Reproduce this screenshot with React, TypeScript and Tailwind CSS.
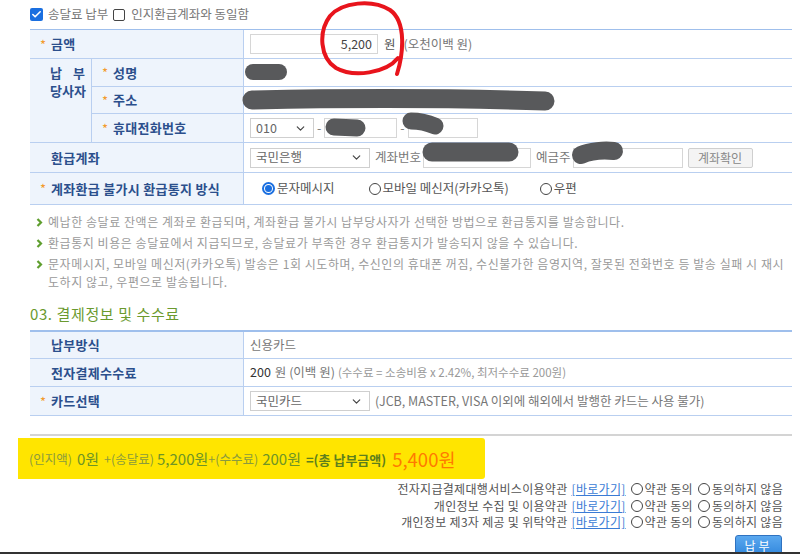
import React from 'react';
import { ChevronDown, Check } from 'lucide-react';

const Star = () => <span className="w-[11px] text-[13px] text-[#f39a2c] leading-none">*</span>;

const Label: React.FC<{ text: string; star?: boolean; w?: string }> = ({ text, star, w = 'w-[214px]' }) => (
  <div className={`${w} shrink-0 bg-[#eef4fc] border-r border-[#b9cff0] flex items-center pl-[10px] pr-1`}>
    {star ? <Star /> : <span className="w-[11px]" />}
    <span className="text-[13px] font-bold text-[#2b4f8c] tracking-[0.3px]">{text}</span>
  </div>
);

const Select: React.FC<{ value: string; w: string }> = ({ value, w }) => (
  <div className={`${w} h-[20px] border border-[#cfcfcf] bg-white flex items-center justify-between pl-[5px] pr-[6px] text-[12.5px] text-[#666]`}>
    <span>{value}</span>
    <ChevronDown className="w-[13px] h-[13px] text-[#444]" strokeWidth={2.2} />
  </div>
);

const Input: React.FC<{ w: string; children?: React.ReactNode }> = ({ w, children }) => (
  <div className={`${w} h-[20px] border border-[#d6d6d6] bg-white flex items-center justify-end pr-[5px] text-[12.5px] text-[#444]`}>
    {children}
  </div>
);

const Radio: React.FC<{ on?: boolean; className?: string }> = ({ on, className = '' }) =>
  on ? (
    <span className={`inline-flex w-[13px] h-[13px] rounded-full border-2 border-[#1a6fe0] items-center justify-center shrink-0 ${className}`}>
      <span className="w-[7px] h-[7px] rounded-full bg-[#1a6fe0]" />
    </span>
  ) : (
    <span className={`inline-block w-[12px] h-[12px] rounded-full border border-[#444] bg-white shrink-0 ${className}`} />
  );

const Bullet = () => (
  <svg width="7" height="9" viewBox="0 0 7 9" className="shrink-0 mt-[5px]">
    <path d="M1.5 1 L5 4.5 L1.5 8" stroke="#5f9e2e" strokeWidth="2.2" fill="none" />
  </svg>
);

const notes = [
  '예납한 송달료 잔액은 계좌로 환급되며, 계좌환급 불가시 납부당사자가 선택한 방법으로 환급통지를 발송합니다.',
  '환급통지 비용은 송달료에서 지급되므로, 송달료가 부족한 경우 환급통지가 발송되지 않을 수 있습니다.',
  '문자메시지, 모바일 메신저(카카오톡) 발송은 1회 시도하며, 수신인의 휴대폰 꺼짐, 수신불가한 음영지역, 잘못된 전화번호 등 발송 실패 시 재시도하지 않고, 우편으로 발송됩니다.',
];

const terms = ['전자지급결제대행서비스이용약관', '개인정보 수집 및 이용약관', '개인정보 제3자 제공 및 위탁약관'];

export default function App() {
  const row = 'flex border-b border-[#b9cff0]';
  return (
    <div className="relative w-[800px] h-[554px] overflow-hidden bg-white font-['Noto_Sans_CJK_KR','Noto_Sans',sans-serif] text-[#666]">
      {/* top checkboxes */}
      <div className="h-[29px] flex items-center pl-[30px] text-[12.5px] text-[#777]">
        <span className="w-[13px] h-[13px] rounded-[2px] bg-[#1a6fe0] flex items-center justify-center">
          <Check className="w-[11px] h-[11px] text-white" strokeWidth={3.5} />
        </span>
        <span className="ml-[5px]">송달료 납부</span>
        <span className="ml-[5px] w-[12px] h-[12px] rounded-[2px] border border-[#444]" />
        <span className="ml-[6px]">인지환급계좌와 동일함</span>
      </div>

      {/* table 1 */}
      <div className="ml-[30px] w-[762px] border-t border-[#9fbfec]">
        <div className={`${row} h-[29px]`}>
          <Label text="금액" star />
          <div className="flex-1 flex items-center pl-[6px] text-[12.5px]">
            <Input w="w-[128px]">5,200</Input>
            <span className="ml-[6px] text-[#555]">원</span>
            <span className="ml-[8px] text-[#777]">(오천이백 원)</span>
          </div>
        </div>
        <div className="flex border-b border-[#b9cff0]">
          <div className="w-[62px] shrink-0 bg-[#eef4fc] border-r border-[#b9cff0] pl-[20px] pt-[5px] text-[13px] font-bold text-[#2b4f8c] leading-[18px]">
            <div className="flex justify-between w-[35px]"><span>납</span><span>부</span></div>
            <div>당사자</div>
          </div>
          <div className="flex-1">
            <div className={`${row} h-[28px]`}>
              <Label text="성명" star w="w-[152px]" />
              <div className="flex-1" />
            </div>
            <div className={`${row} h-[27px] border-[#9fbfec]`}>
              <Label text="주소" star w="w-[152px]" />
              <div className="flex-1" />
            </div>
            <div className="flex h-[28px]">
              <Label text="휴대전화번호" star w="w-[152px]" />
              <div className="flex-1 flex items-center pl-[6px] text-[12.5px]">
                <Select value="010" w="w-[64px]" />
                <span className="mx-[3px] text-[#777]">-</span>
                <Input w="w-[73px]" />
                <span className="mx-[3px] text-[#777]">-</span>
                <Input w="w-[70px]" />
              </div>
            </div>
          </div>
        </div>
        <div className={`${row} h-[30px]`}>
          <Label text="환급계좌" />
          <div className="flex-1 flex items-center pl-[6px] text-[12.5px]">
            <Select value="국민은행" w="w-[120px]" />
            <span className="ml-[5px] mr-[2px] text-[#777]">계좌번호</span>
            <Input w="w-[108px]" />
            <span className="ml-[5px] mr-[2px] text-[#777]">예금주</span>
            <Input w="w-[110px]" />
            <button className="ml-[5px] w-[65px] h-[20px] border border-[#cfcfcf] rounded-[2px] bg-[#f4f4f4] text-[12px] text-[#888]">계좌확인</button>
          </div>
        </div>
        <div className={`${row} h-[32px]`}>
          <Label text="계좌환급 불가시 환급통지 방식" star />
          <div className="flex-1 flex items-center pl-[18px] text-[12.5px] text-[#555]">
            <Radio on />
            <span className="ml-[2px]">문자메시지</span>
            <Radio className="ml-[34px]" />
            <span className="ml-[2px]">모바일 메신저(카카오톡)</span>
            <Radio className="ml-[31px]" />
            <span className="ml-[2px]">우편</span>
          </div>
        </div>
      </div>

      {/* notes */}
      <ul className="mt-[8px] ml-[36px] w-[752px] flex flex-col gap-[3px]">
        {notes.map((n, i) => (
          <li key={i} className="flex gap-[5px] text-[12px] leading-[18px] text-[#9a9a9a] tracking-[0.55px]">
            <Bullet />
            <span>{n}</span>
          </li>
        ))}
      </ul>

      {/* section 03 */}
      <div className="mt-[13px] ml-[30px] h-[20px] flex items-center text-[15px] text-[#6b9a2f] tracking-[0.6px]">03. 결제정보 및 수수료</div>
      <div className="mt-[6px] ml-[30px] w-[762px] border-t-2 border-[#9fbfec]">
        <div className={`${row} h-[27px]`}>
          <Label text="납부방식" />
          <div className="flex-1 flex items-center pl-[6px] text-[12.5px] text-[#777]">신용카드</div>
        </div>
        <div className={`${row} h-[28px] border-[#9fbfec]`}>
          <Label text="전자결제수수료" />
          <div className="flex-1 flex items-center pl-[6px] text-[12.5px]">
            <span className="text-[#333]">200</span>
            <span className="ml-[4px] text-[#777]">원 (이백 원)</span>
            <span className="ml-[3px] text-[11.5px] text-[#999]">(수수료 = 소송비용 x 2.42%, 최저수수료 200원)</span>
          </div>
        </div>
        <div className={`${row} h-[29px]`}>
          <Label text="카드선택" star />
          <div className="flex-1 flex items-center pl-[6px] text-[12.5px]">
            <Select value="국민카드" w="w-[120px]" />
            <span className="ml-[5px] text-[#777]">(JCB, MASTER, VISA 이외에 해외에서 발행한 카드는 사용 불가)</span>
          </div>
        </div>
      </div>

      <div className="mt-[18px] ml-[30px] w-[762px] border-t-2 border-[#d4d4d4]" />

      {/* total */}
      <div className="mt-[2px] ml-[18px] w-[467px] h-[41px] bg-[#ffe500] rounded-r-[3px] flex items-center pl-[11px] pt-[2px] text-[#6e9426] whitespace-nowrap">
        <span className="text-[12.5px] text-[#8a9a3e]">(인지액)</span>
        <span className="ml-[5px] text-[15px]">0원</span>
        <span className="ml-[5px] text-[12.5px] text-[#8a9a3e]">+(송달료)</span>
        <span className="ml-[3px] text-[15px]">5,200원</span>
        <span className="text-[12.5px] text-[#8a9a3e]">+(수수료)</span>
        <span className="ml-[4px] text-[15px]">200원</span>
        <span className="ml-[5px] text-[13px] font-bold text-[#5d7f1d]">=(총 납부금액)</span>
        <span className="ml-[6px] text-[18.5px] text-[#ff7a00]">5,400원</span>
      </div>

      {/* terms */}
      <div className="mt-[2px] pr-[17px] flex flex-col items-end text-[12px] leading-[16.5px] tracking-[0.3px] text-[#555]">
        {terms.map((t) => (
          <div key={t} className="flex items-center h-[16.5px]">
            <span>{t}</span>
            <span className="ml-[4px] text-[#3a7bd5] underline">[바로가기]</span>
            <Radio className="ml-[5px]" />
            <span className="ml-[2px]">약관 동의</span>
            <Radio className="ml-[5px]" />
            <span className="ml-[2px]">동의하지 않음</span>
          </div>
        ))}
      </div>

      <div className="mt-[4px] pr-[18px] flex justify-end">
        <button className="w-[47px] h-[22px] rounded-t-[3px] border border-[#2f72c0] bg-gradient-to-b from-[#5aa8ef] to-[#2f86dc] text-white text-[12px] tracking-[3px] leading-[20px]">납부</button>
      </div>

      {/* drawn marks over the screenshot */}
      <svg className="absolute inset-0 pointer-events-none" width="800" height="554">
        <g stroke="#58595b" strokeLinecap="round" fill="none">
          <path d="M253 72 L279 72" strokeWidth="16" />
          <path d="M252 100 C350 98, 450 98, 545 101" strokeWidth="19" />
          <path d="M334 127 L357 128" strokeWidth="17" />
          <path d="M411 121 C420 121, 428 123, 435 126" strokeWidth="17" />
          <path d="M432 152 L509 152" strokeWidth="19" />
          <path d="M581 155 C590 151, 604 150, 614 151" strokeWidth="18" />
        </g>
        <path
          d="M397 74 C403 55, 407 22, 390 10 C372 -1, 342 2, 330 16 C318 32, 320 58, 336 68 C354 78, 386 73, 398 58"
          stroke="#e8141c" strokeWidth="4" fill="none" strokeLinecap="round"
        />
        <rect x="0" y="552" width="800" height="2" fill="#333" />
      </svg>
    </div>
  );
}
